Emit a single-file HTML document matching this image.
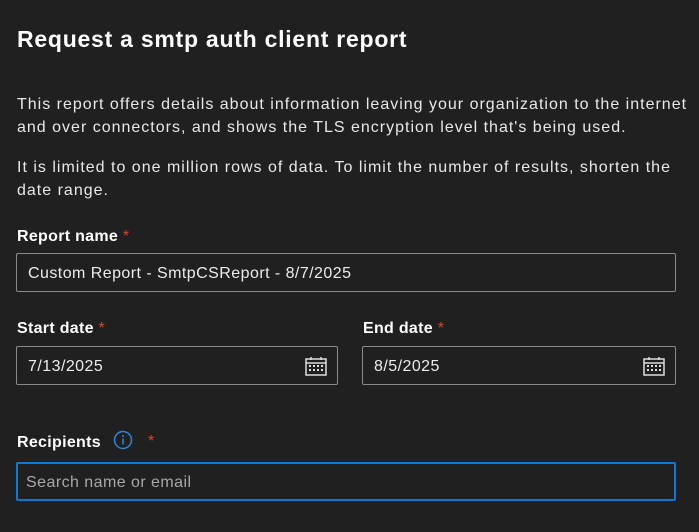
<!DOCTYPE html>
<html><head><meta charset="utf-8"><style>
*{margin:0;padding:0;box-sizing:border-box}
body{width:699px;height:532px;background:#202020;color:#fff;font-family:"Segoe UI","Liberation Sans",sans-serif;position:relative;overflow:hidden}
.a{position:absolute;white-space:nowrap}
h1{font-size:23px;letter-spacing:0.75px;font-weight:bold;left:17px;top:26px}
p{font-size:16px;letter-spacing:1px;color:#e8e8e8;left:17px;line-height:23px}
.l{font-size:16px;letter-spacing:0.3px;font-weight:bold}
.s{color:#e0431f;font-weight:normal}
.in{position:absolute;border:1px solid #8a8a8a;border-radius:2px;height:39px;font-size:16px;letter-spacing:0.45px;color:#ececec;padding:0 11px;line-height:40px}
.cal{position:absolute;right:10px;top:9px}
</style></head><body>
<h1 class="a">Request a smtp auth client report</h1>
<p class="a" style="top:93px">This report offers details about information leaving your organization to the internet<br>and over connectors, and shows the TLS encryption level that's being used.</p>
<p class="a" style="top:156px">It is limited to one million rows of data. To limit the number of results, shorten the<br>date range.</p>
<div class="a l" style="left:17px;top:228px">Report name <span class="s">*</span></div>
<div class="in" style="left:16px;top:253px;width:660px">Custom Report - SmtpCSReport - 8/7/2025</div>
<div class="a l" style="left:17px;top:320px">Start date <span class="s">*</span></div>
<div class="a l" style="left:363px;top:320px">End date <span class="s">*</span></div>
<div class="in" style="left:16px;top:346px;width:322px">7/13/2025
<svg class="cal" width="22" height="20" viewBox="0 0 22 20" fill="none" stroke="#ddd" stroke-width="1.5"><rect x="1" y="3" width="20" height="16"/><line x1="1" y1="7" x2="21" y2="7"/><line x1="6" y1="1" x2="6" y2="4"/><line x1="16" y1="1" x2="16" y2="4"/><g fill="#ddd" stroke="none"><rect x="4" y="9" width="2" height="2"/><rect x="8" y="9" width="2" height="2"/><rect x="12" y="9" width="2" height="2"/><rect x="16" y="9" width="2" height="2"/><rect x="4" y="13" width="2" height="2"/><rect x="8" y="13" width="2" height="2"/><rect x="12" y="13" width="2" height="2"/><rect x="16" y="13" width="2" height="2"/></g></svg></div>
<div class="in" style="left:362px;top:346px;width:314px">8/5/2025
<svg class="cal" width="22" height="20" viewBox="0 0 22 20" fill="none" stroke="#ddd" stroke-width="1.5"><rect x="1" y="3" width="20" height="16"/><line x1="1" y1="7" x2="21" y2="7"/><line x1="6" y1="1" x2="6" y2="4"/><line x1="16" y1="1" x2="16" y2="4"/><g fill="#ddd" stroke="none"><rect x="4" y="9" width="2" height="2"/><rect x="8" y="9" width="2" height="2"/><rect x="12" y="9" width="2" height="2"/><rect x="16" y="9" width="2" height="2"/><rect x="4" y="13" width="2" height="2"/><rect x="8" y="13" width="2" height="2"/><rect x="12" y="13" width="2" height="2"/><rect x="16" y="13" width="2" height="2"/></g></svg></div>
<div class="a l" style="left:17px;top:434px">Recipients</div>
<svg class="a" style="left:113px;top:430px" width="20" height="20" viewBox="0 0 20 20"><circle cx="10" cy="10" r="8.5" fill="none" stroke="#2b88d8" stroke-width="1.5"/><circle cx="10" cy="6" r="1" fill="#2b88d8"/><line x1="10" y1="8.5" x2="10" y2="14.5" stroke="#2b88d8" stroke-width="1.5"/></svg>
<div class="a s" style="left:148px;top:433px;font-size:16px">*</div>
<div class="in" style="left:16px;top:462px;width:660px;border:2px solid #0f78d4;color:#a8a8a8;line-height:38px;padding-left:8px">Search name or email</div>
</body></html>
